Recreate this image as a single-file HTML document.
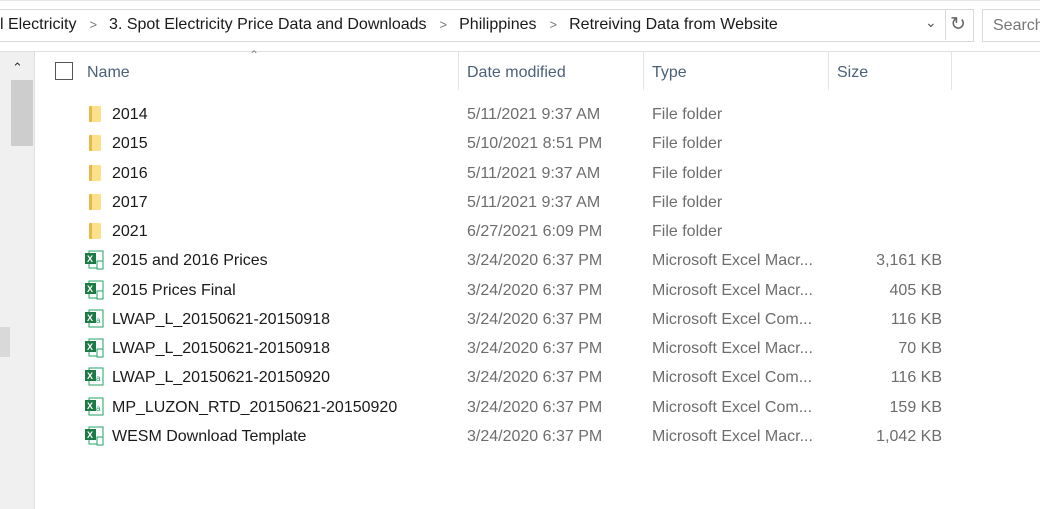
<!DOCTYPE html>
<html><head><style>
body{margin:0;width:1040px;height:509px;background:#fff;font-family:"Liberation Sans",sans-serif;position:relative;overflow:hidden}
.a{position:absolute}
.addr{left:-2px;top:9px;width:975px;height:31px;border:1px solid #d9d9d9;border-left:none}
.bc{left:0;top:16px;font-size:16px;color:#1a1a1a;white-space:nowrap}
.bc span.s{color:#777;margin:0 12px 0 13px;font-size:13px}
.search{left:982px;top:9px;width:70px;height:31px;border:1px solid #d9d9d9;color:#777;font-size:16px;line-height:31px;padding-left:10px}
.hdr{font-size:16px;color:#4c607a;top:64px}
.col{top:52px;width:1px;height:38px;background:#e5e5e5}
.row{font-size:16px;color:#1a1a1a;height:29px;line-height:29px}
.g{color:#6d6d6d}
.fold{width:12px;height:16px;background:linear-gradient(90deg,#e7b84a 0 3px,#fde08a 3px);border-radius:1px}
</style></head><body>
<div class="a" style="left:0;top:0;width:1040px;height:1px;background:#e5e5e5"></div>
<div class="a addr"></div>
<div class="a bc">l Electricity<span class="s">&gt;</span>3. Spot Electricity Price Data and Downloads<span class="s">&gt;</span>Philippines<span class="s">&gt;</span>Retreiving Data from Website</div>
<div class="a" style="left:925px;top:14px;color:#555;font-size:14px">&#8964;</div>
<div class="a" style="left:945px;top:10px;width:1px;height:30px;background:#d9d9d9"></div>
<div class="a" style="left:950px;top:13px;color:#666;font-size:19px">&#8635;</div>
<div class="a search">Search</div>
<div class="a" style="left:0;top:51px;width:1040px;height:1px;background:#e0e0e0"></div>
<div class="a" style="left:0;top:52px;width:34px;height:457px;background:#f0f0f0"></div>
<div class="a" style="left:12px;top:60px;color:#333;font-size:13px">&#8963;</div>
<div class="a" style="left:11px;top:80px;width:22px;height:66px;background:#cdcdcd"></div>
<div class="a" style="left:0;top:327px;width:10px;height:30px;background:#d9d9d9"></div>
<div class="a" style="left:34px;top:52px;width:1px;height:457px;background:#e0e0e0"></div>
<div class="a" style="left:55px;top:62px;width:16px;height:16px;border:1px solid #555"></div>
<div class="a" style="left:249px;top:48px;color:#888;font-size:12px">&#8963;</div>
<div class="a hdr" style="left:87px">Name</div>
<div class="a col" style="left:458px"></div>
<div class="a hdr" style="left:467px">Date modified</div>
<div class="a col" style="left:643px"></div>
<div class="a hdr" style="left:652px">Type</div>
<div class="a col" style="left:828px"></div>
<div class="a hdr" style="left:837px">Size</div>
<div class="a col" style="left:951px"></div>
<div id="rows"></div>
<script>
var d=[["2014","5/11/2021 9:37 AM","File folder","",0],["2015","5/10/2021 8:51 PM","File folder","",0],["2016","5/11/2021 9:37 AM","File folder","",0],["2017","5/11/2021 9:37 AM","File folder","",0],["2021","6/27/2021 6:09 PM","File folder","",0],
["2015 and 2016 Prices","3/24/2020 6:37 PM","Microsoft Excel Macr...","3,161 KB",1],["2015 Prices Final","3/24/2020 6:37 PM","Microsoft Excel Macr...","405 KB",1],["LWAP_L_20150621-20150918","3/24/2020 6:37 PM","Microsoft Excel Com...","116 KB",2],["LWAP_L_20150621-20150918","3/24/2020 6:37 PM","Microsoft Excel Macr...","70 KB",1],["LWAP_L_20150621-20150920","3/24/2020 6:37 PM","Microsoft Excel Com...","116 KB",2],["MP_LUZON_RTD_20150621-20150920","3/24/2020 6:37 PM","Microsoft Excel Com...","159 KB",2],["WESM Download Template","3/24/2020 6:37 PM","Microsoft Excel Macr...","1,042 KB",1]];
var h="";d.forEach(function(r,i){var y=100+i*29.25;
var ic=r[4]==0?'<div class="a fold" style="left:89px;top:'+(y+6)+'px"></div>':
'<svg class="a" style="left:85px;top:'+(y+4)+'px" width="20" height="20"><rect x="4" y="1" width="14" height="17" fill="#fff" stroke="#21a366"/><rect x="0" y="3" width="11" height="11" fill="#1d7a45"/><text x="2" y="12" font-size="9" font-weight="bold" fill="#fff" font-family="Liberation Sans">X</text>'+(r[4]==1?'<rect x="12" y="11" width="6" height="8" fill="#fff" stroke="#21a366"/>':'<text x="11" y="14" font-size="8" fill="#21a366" font-family="Liberation Sans">a</text>')+'</svg>';
h+=ic+'<div class="a row" style="left:112px;top:'+y+'px">'+r[0]+'</div><div class="a row g" style="left:467px;top:'+y+'px">'+r[1]+'</div><div class="a row g" style="left:652px;top:'+y+'px">'+r[2]+'</div><div class="a row g" style="right:98px;top:'+y+'px;text-align:right">'+r[3]+'</div>';});
document.getElementById("rows").innerHTML=h;
</script>
</body></html>
